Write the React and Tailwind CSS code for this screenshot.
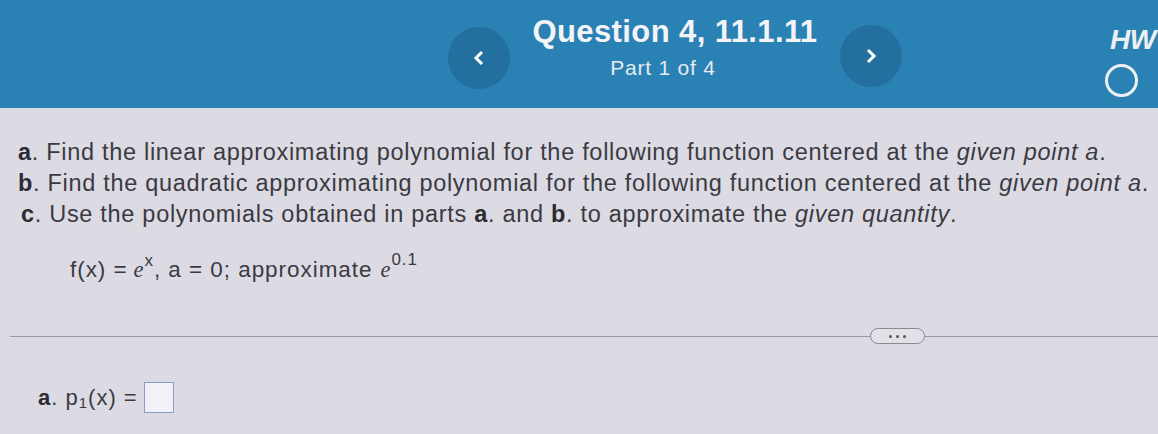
export default function App() {
  return (
    <div className="w-[1158px] h-[434px] overflow-hidden bg-[#dcdbe3] text-[#3b3a42]" style={{ fontFamily: '"Liberation Sans", Arial, sans-serif' }}>
      <header className="h-[108px] bg-[#2a82b4] flex items-start relative">
        <div className="w-[448px] shrink-0" />
        <button className="mt-[27px] w-[62px] h-[62px] rounded-full bg-[#236f9f] flex items-center justify-center text-white shrink-0">
          <svg width="14" height="16" viewBox="0 0 14 16"><path d="M10 2 L4 8 L10 14" stroke="white" strokeWidth="3" fill="none" /></svg>
        </button>
        <div className="w-[330px] shrink-0 flex flex-col items-center pt-[13px]">
          <div className="text-[31px] font-bold text-[#f4f4f8] leading-[37px] tracking-[0.4px]">Question 4, 11.1.11</div>
          <div className="text-[21px] text-[#e6eaf0] leading-[24px] mt-[6px] tracking-[0.8px] mr-[24px]">Part 1 of 4</div>
        </div>
        <button className="mt-[25px] w-[62px] h-[62px] rounded-full bg-[#236f9f] flex items-center justify-center text-white shrink-0">
          <svg width="14" height="16" viewBox="0 0 14 16"><path d="M4 2 L10 8 L4 14" stroke="white" strokeWidth="3" fill="none" /></svg>
        </button>
        <div className="flex-1" />
        <div className="w-[53px] shrink-0 flex flex-col items-start pt-[25px]">
          <div className="text-[28px] font-bold italic text-[#eef0f4] leading-[30px] tracking-[-0.5px] whitespace-nowrap pl-[5px]">HW</div>
          <div className="mt-[9px] w-[33px] h-[33px] rounded-full border-[3px] border-[#eef0f4]" />
        </div>
      </header>
      <div className="pl-[18px] pt-[29px] text-[23.5px] leading-[31px] tracking-[0.7px]">
        <div className="whitespace-nowrap"><b className="text-[#2c2b33]">a</b>. Find the linear approximating polynomial for the following function centered at the <i>given point a</i>.</div>
        <div className="whitespace-nowrap"><b className="text-[#2c2b33]">b</b>. Find the quadratic approximating polynomial for the following function centered at the <i>given point a</i>.</div>
        <div className="pl-[3px] whitespace-nowrap"><b className="text-[#2c2b33]">c</b>. Use the polynomials obtained in parts <b className="text-[#2c2b33]">a</b>. and <b className="text-[#2c2b33]">b</b>. to approximate the <i>given quantity</i>.</div>
        <div className="pl-[52px] mt-[24px] flex items-baseline whitespace-nowrap text-[22.5px] tracking-[0.95px]">
          <span>f(x) = </span>
          <span className="ml-[6px]" style={{ fontFamily: '"Liberation Serif", serif' }}><i>e</i></span>
          <span className="text-[17px] relative top-[-11px]">x</span>
          <span>, a = 0; approximate </span>
          <span className="ml-[8px]" style={{ fontFamily: '"Liberation Serif", serif' }}><i>e</i></span>
          <span className="text-[17px] relative top-[-12px]">0.1</span>
        </div>
      </div>
      <div className="mt-[41px] ml-[10px] flex items-center">
        <div className="w-[860px] h-[1px] bg-[#9a99a3]" />
        <div className="w-[55px] h-[16px] rounded-full border border-[#8a8994] bg-[#e2e1e8] flex items-center justify-center gap-[4px]">
          <span className="w-[3px] h-[3px] rounded-full bg-[#555]" />
          <span className="w-[3px] h-[3px] rounded-full bg-[#555]" />
          <span className="w-[3px] h-[3px] rounded-full bg-[#555]" />
        </div>
        <div className="flex-1 h-[1px] bg-[#9a99a3]" />
      </div>
      <div className="mt-[37px] pl-[38px] flex items-center text-[22px] tracking-[1px] whitespace-nowrap">
        <b className="text-[#2c2b33]">a</b><span>. p</span><span className="text-[15px] relative top-[6px]">1</span><span>(x) = </span>
        <span className="ml-[6px] w-[30px] h-[31px] border border-[#8a9ac8] bg-[#f2f2f6]" />
      </div>
    </div>
  );
}
